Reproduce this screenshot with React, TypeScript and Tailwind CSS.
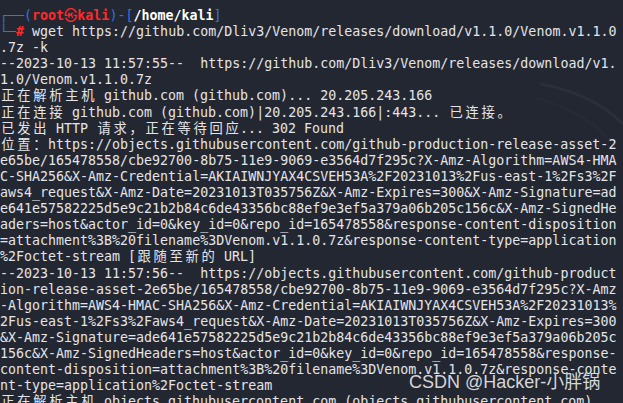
import React from "react";

const WIDE = /[\u2E80-\u9FFF\u3000-\u303F\uFF00-\uFFEF]/;

function Cells({ text }: { text: string }) {
  const parts: React.ReactNode[] = [];
  let buf = "";
  let k = 0;
  for (const ch of Array.from(text)) {
    if (WIDE.test(ch)) {
      if (buf) {
        parts.push(buf);
        buf = "";
      }
      parts.push(
        <span key={k++} className="inline-block w-4 text-center">
          {ch}
        </span>
      );
    } else {
      buf += ch;
    }
  }
  if (buf) parts.push(buf);
  return <>{parts}</>;
}

const lines: string[] = [
  ".7z -k",
  "--2023-10-13 11:57:55--  https://github.com/Dliv3/Venom/releases/download/v1.",
  "1.0/Venom.v1.1.0.7z",
  "正在解析主机 github.com (github.com)... 20.205.243.166",
  "正在连接 github.com (github.com)|20.205.243.166|:443... 已连接。",
  "已发出 HTTP 请求，正在等待回应... 302 Found",
  "位置：https://objects.githubusercontent.com/github-production-release-asset-2",
  "e65be/165478558/cbe92700-8b75-11e9-9069-e3564d7f295c?X-Amz-Algorithm=AWS4-HMA",
  "C-SHA256&X-Amz-Credential=AKIAIWNJYAX4CSVEH53A%2F20231013%2Fus-east-1%2Fs3%2F",
  "aws4_request&X-Amz-Date=20231013T035756Z&X-Amz-Expires=300&X-Amz-Signature=ad",
  "e641e57582225d5e9c21b2b84c6de43356bc88ef9e3ef5a379a06b205c156c&X-Amz-SignedHe",
  "aders=host&actor_id=0&key_id=0&repo_id=165478558&response-content-disposition",
  "=attachment%3B%20filename%3DVenom.v1.1.0.7z&response-content-type=application",
  "%2Foctet-stream [跟随至新的 URL]",
  "--2023-10-13 11:57:56--  https://objects.githubusercontent.com/github-product",
  "ion-release-asset-2e65be/165478558/cbe92700-8b75-11e9-9069-e3564d7f295c?X-Amz",
  "-Algorithm=AWS4-HMAC-SHA256&X-Amz-Credential=AKIAIWNJYAX4CSVEH53A%2F20231013%",
  "2Fus-east-1%2Fs3%2Faws4_request&X-Amz-Date=20231013T035756Z&X-Amz-Expires=300",
  "&X-Amz-Signature=ade641e57582225d5e9c21b2b84c6de43356bc88ef9e3ef5a379a06b205c",
  "156c&X-Amz-SignedHeaders=host&actor_id=0&key_id=0&repo_id=165478558&response-",
  "content-disposition=attachment%3B%20filename%3DVenom.v1.1.0.7z&response-conte",
  "nt-type=application%2Foctet-stream",
  "正在解析主机 objects.githubusercontent.com (objects.githubusercontent.com)...",
];

export default function App() {
  return (
    <div className="relative w-[623px] h-[403px] overflow-hidden bg-[#232731]">
      <svg
        className="absolute left-0 top-0"
        width="623"
        height="403"
        viewBox="0 0 623 403"
      >
        <path
          d="M540 84 C 565 88, 600 100, 623 124"
          stroke="#2a2f39"
          strokeWidth="3"
          fill="none"
        />
        <path
          d="M536 98 C 560 104, 590 118, 610 140"
          stroke="#272b35"
          strokeWidth="2"
          fill="none"
        />
      </svg>
      <div
        className="relative pt-[8px] text-[13.3px] leading-[16.1px] text-[#e3e5ea] whitespace-pre"
        style={{
          fontFamily:
            '"DejaVu Sans Mono", "Noto Sans CJK SC", monospace',
        }}
      >
        <div className="h-[16.1px]">
          <span className="text-[#2f74e6]">┌──(</span>
          <span className="text-[#ff2a2a] font-bold">root㉿kali</span>
          <span className="text-[#2f74e6]">)-[</span>
          <span className="text-white font-bold">/home/kali</span>
          <span className="text-[#2f74e6]">]</span>
        </div>
        <div className="h-[16.1px]">
          <span className="text-[#2f74e6]">└─</span>
          <span className="text-[#ff2a2a] font-bold">#</span>
          <span> wget https://github.com/Dliv3/Venom/releases/download/v1.1.0/Venom.v1.1.0</span>
        </div>
        {lines.map((l, i) => (
          <div key={i} className="h-[16.1px]">
            <Cells text={l} />
          </div>
        ))}
      </div>
      <div
        className="absolute left-[409px] top-[371px] text-[18px] leading-[22px] text-[#d4d6da]"
        style={{
          fontFamily: '"Liberation Sans", "Noto Sans CJK SC", sans-serif',
        }}
      >
        CSDN @Hacker-小胖锅
      </div>
    </div>
  );
}
